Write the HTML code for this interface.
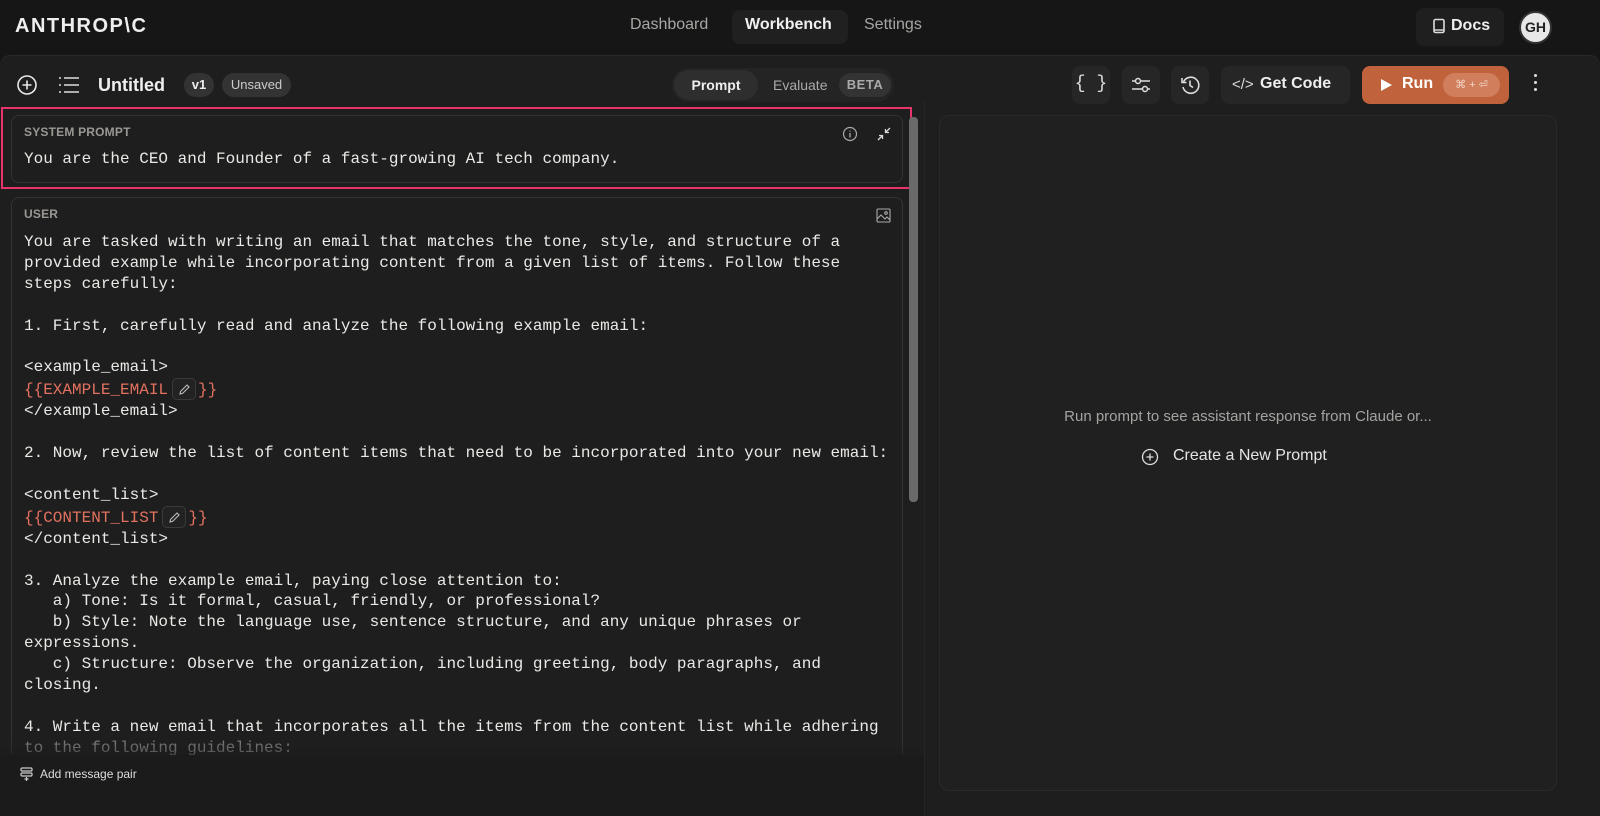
<!DOCTYPE html>
<html><head><meta charset="utf-8"><style>
*{box-sizing:border-box;margin:0;padding:0}
body{width:1600px;height:816px;background:#161616;font-family:"Liberation Sans",sans-serif;color:#e8e6e3;position:relative;overflow:hidden}
.a{position:absolute}
.logo{left:15px;top:15px;font-size:20px;font-weight:bold;letter-spacing:1.5px;color:#eee}
.nav{top:16px;font-size:16px;color:#a8a6a3}
.main{left:0;top:55px;width:1600px;height:761px;background:#1e1e1e;border-top:1px solid #2a2a2a;border-radius:10px 10px 0 0}
.pill{border-radius:14px;background:#333;color:#ccc;font-size:13px;text-align:center}
.btn{background:#262626;border-radius:8px;height:38px;top:66px}
.box{border:1px solid #333;border-radius:8px;background:#1e1e1e}
.lbl{font-size:12px;font-weight:bold;color:#9a9893;letter-spacing:.2px}
.mono{font-family:"Liberation Mono",monospace;font-size:16px;line-height:20.9px;white-space:pre;color:#ebe9e6}
.v{color:#e2725f}
.ed{display:inline-block;width:24px;height:22px;border:1px solid #3a3a3a;border-radius:5px;vertical-align:-6px;background:#222;position:relative;margin:0 2px 0 4px}
.ed svg{position:absolute;left:5px;top:4px}
</style></head><body>
<div class="a logo">ANTHROP\C</div>
<div class="a nav" style="left:630px">Dashboard</div>
<div class="a" style="left:732px;top:10px;width:116px;height:34px;background:#202020;border-radius:8px"></div>
<div class="a nav" style="left:745px;color:#f0f0f0;font-weight:bold">Workbench</div>
<div class="a nav" style="left:864px">Settings</div>
<div class="a" style="left:1416px;top:8px;width:88px;height:38px;background:#1f1f1f;border-radius:8px"></div>
<svg class="a" style="left:1432px;top:18px" width="14" height="17" viewBox="0 0 14 17"><rect x="2" y="1.5" width="10" height="13" rx="1.5" fill="none" stroke="#ddd" stroke-width="1.6"/><path d="M2 12h10" stroke="#ddd" stroke-width="1.4"/></svg>
<div class="a" style="left:1451px;top:17px;font-size:16px;font-weight:bold;color:#eee">Docs</div>
<div class="a" style="left:1519px;top:11px;width:33px;height:33px;border-radius:50%;background:#e8e8e8;border:2px solid #333;color:#222;font-weight:bold;font-size:14px;text-align:center;line-height:29px">GH</div>

<div class="a main"></div>
<svg class="a" style="left:15px;top:73px" width="24" height="24" viewBox="0 0 24 24"><circle cx="12" cy="12" r="9" fill="none" stroke="#e8e8e8" stroke-width="1.6"/><path d="M12 7.5v9M7.5 12h9" stroke="#e8e8e8" stroke-width="1.6"/></svg>
<svg class="a" style="left:58px;top:75px" width="22" height="20" viewBox="0 0 22 20"><g stroke="#ddd" stroke-width="1.6"><path d="M6 3h15M6 10h15M6 17h15"/><path d="M1 3h2M1 10h2M1 17h2"/></g></svg>
<div class="a" style="left:98px;top:75px;font-size:18px;font-weight:bold;color:#eee">Untitled</div>
<div class="a pill" style="left:184px;top:73px;width:30px;height:24px;line-height:24px;font-weight:bold;color:#eee">v1</div>
<div class="a pill" style="left:222px;top:73px;width:69px;height:24px;line-height:24px">Unsaved</div>

<div class="a" style="left:672px;top:68px;width:222px;height:34px;background:#242424;border-radius:17px"></div>
<div class="a" style="left:674px;top:70px;width:84px;height:30px;background:#2e2e2e;border-radius:15px;font-size:14px;font-weight:bold;text-align:center;line-height:30px;color:#eee">Prompt</div>
<div class="a" style="left:773px;top:77px;font-size:14px;color:#aaa">Evaluate</div>
<div class="a pill" style="left:839px;top:73px;width:52px;height:24px;line-height:24px;font-weight:bold;color:#aaa;letter-spacing:.5px">BETA</div>

<div class="a btn" style="left:1072px;width:38px;font-family:'Liberation Mono',monospace;font-size:18px;text-align:center;line-height:36px;color:#ddd">{ }</div>
<div class="a btn" style="left:1122px;width:38px"><svg width="38" height="38" viewBox="0 0 38 38"><g stroke="#ddd" stroke-width="1.5" fill="none"><path d="M10 15h18M10 23h18"/><circle cx="16" cy="15" r="2.5" fill="#262626"/><circle cx="23" cy="23" r="2.5" fill="#262626"/></g></svg></div>
<div class="a btn" style="left:1171px;width:38px"><svg width="38" height="38" viewBox="0 0 38 38"><g stroke="#ddd" stroke-width="1.6" fill="none"><path d="M12.5 16a8 8 0 1 1-0.5 5"/><path d="M11 12v4.5h4.5"/><path d="M19 14.5v5l3 2"/></g></svg></div>
<div class="a btn" style="left:1221px;width:129px"></div>
<div class="a" style="left:1232px;top:76px;font-size:15px;color:#ddd">&lt;/&gt;</div>
<div class="a" style="left:1260px;top:75px;font-size:16px;font-weight:bold;color:#eee">Get Code</div>
<div class="a" style="left:1362px;top:66px;width:147px;height:38px;background:#c0623b;border-radius:8px"></div>
<svg class="a" style="left:1379px;top:78px" width="14" height="14" viewBox="0 0 14 14"><path d="M2 1l11 6-11 6z" fill="#fff"/></svg>
<div class="a" style="left:1402px;top:75px;font-size:16px;font-weight:bold;color:#fff">Run</div>
<div class="a" style="left:1443px;top:73px;width:57px;height:24px;border-radius:12px;background:#d07e5c;font-size:11px;color:#f3d4c6;text-align:center;line-height:24px">⌘ + ⏎</div>
<div class="a" style="left:1534px;top:74px;width:4px;height:20px"><div style="width:3px;height:3px;background:#ddd;border-radius:50%;margin-bottom:4px"></div><div style="width:3px;height:3px;background:#ddd;border-radius:50%;margin-bottom:4px"></div><div style="width:3px;height:3px;background:#ddd;border-radius:50%"></div></div>

<div class="a" style="left:1px;top:107px;width:911px;height:82px;border:2px solid #e8336b"></div>
<div class="a box" style="left:11px;top:115px;width:892px;height:68px"></div>
<div class="a lbl" style="left:24px;top:125px">SYSTEM PROMPT</div>
<svg class="a" style="left:842px;top:126px" width="16" height="16" viewBox="0 0 16 16"><circle cx="8" cy="8" r="6.5" fill="none" stroke="#aaa" stroke-width="1.2"/><path d="M8 7v4.5M8 4.6v1" stroke="#aaa" stroke-width="1.3"/></svg>
<svg class="a" style="left:876px;top:126px" width="16" height="16" viewBox="0 0 16 16"><g stroke="#ddd" stroke-width="1.3" fill="none"><path d="M2 14l4.5-4.5M3 9.5h3.5V13M14 2l-4.5 4.5M13 6.5H9.5V3"/></g></svg>
<div class="a mono" style="left:24px;top:149px">You are the CEO and Founder of a fast-growing AI tech company.</div>

<div class="a box" style="left:11px;top:197px;width:892px;height:600px;border-bottom:none"></div>
<div class="a lbl" style="left:24px;top:207px">USER</div>
<svg class="a" style="left:876px;top:208px" width="15" height="15" viewBox="0 0 15 15"><g stroke="#aaa" stroke-width="1.1" fill="none"><rect x="1" y="1" width="13" height="13" rx="1"/><path d="M1 11l4-4 4 4 2-2 3 3"/><circle cx="10" cy="5" r="1.3"/></g></svg>
<div class="a mono" style="left:24px;top:232px">You are tasked with writing an email that matches the tone, style, and structure of a
provided example while incorporating content from a given list of items. Follow these
steps carefully:

1. First, carefully read and analyze the following example email:

&lt;example_email&gt;
<span class="v">{{EXAMPLE_EMAIL</span><span class="ed"><svg width="13" height="13" viewBox="0 0 13 13"><path d="M2 11l.6-2.6L9 2l2 2-6.4 6.4z" fill="none" stroke="#bbb" stroke-width="1.1"/></svg></span><span class="v">}}</span>
&lt;/example_email&gt;

2. Now, review the list of content items that need to be incorporated into your new email:

&lt;content_list&gt;
<span class="v">{{CONTENT_LIST</span><span class="ed"><svg width="13" height="13" viewBox="0 0 13 13"><path d="M2 11l.6-2.6L9 2l2 2-6.4 6.4z" fill="none" stroke="#bbb" stroke-width="1.1"/></svg></span><span class="v">}}</span>
&lt;/content_list&gt;

3. Analyze the example email, paying close attention to:
   a) Tone: Is it formal, casual, friendly, or professional?
   b) Style: Note the language use, sentence structure, and any unique phrases or
expressions.
   c) Structure: Observe the organization, including greeting, body paragraphs, and
closing.

4. Write a new email that incorporates all the items from the content list while adhering
<span style="color:#777">to the following guidelines:</span></div>
<div class="a" style="left:0;top:742px;width:920px;height:30px;background:linear-gradient(#1e1e1e00,#1b1b1b)"></div>
<div class="a" style="left:0;top:755px;width:925px;height:61px;background:#1b1b1b"></div>
<svg class="a" style="left:20px;top:767px" width="13" height="15" viewBox="0 0 13 15"><g stroke="#ccc" stroke-width="1.2" fill="none"><rect x="1" y="1" width="11" height="3" rx="1"/><rect x="1" y="6" width="11" height="3" rx="1"/><path d="M6.5 10v4M4.5 12h4"/></g></svg>
<div class="a" style="left:40px;top:767px;font-size:12px;color:#ddd">Add message pair</div>

<div class="a" style="left:909px;top:117px;width:9px;height:385px;background:#6a6a6a;border-radius:4px"></div>
<div class="a" style="left:924px;top:100px;width:1px;height:716px;background:#262626"></div>

<div class="a" style="left:939px;top:115px;width:618px;height:676px;background:#202020;border:1px solid #2a2a2a;border-radius:10px"></div>
<div class="a" style="left:939px;top:408px;width:618px;text-align:center;font-size:15px;color:#a5a3a0">Run prompt to see assistant response from Claude or...</div>
<svg class="a" style="left:1141px;top:448px" width="18" height="18" viewBox="0 0 18 18"><circle cx="9" cy="9" r="7.5" fill="none" stroke="#ddd" stroke-width="1.3"/><path d="M9 5.5v7M5.5 9h7" stroke="#ddd" stroke-width="1.3"/></svg>
<div class="a" style="left:1173px;top:447px;font-size:16px;color:#e5e5e5">Create a New Prompt</div>
</body></html>
